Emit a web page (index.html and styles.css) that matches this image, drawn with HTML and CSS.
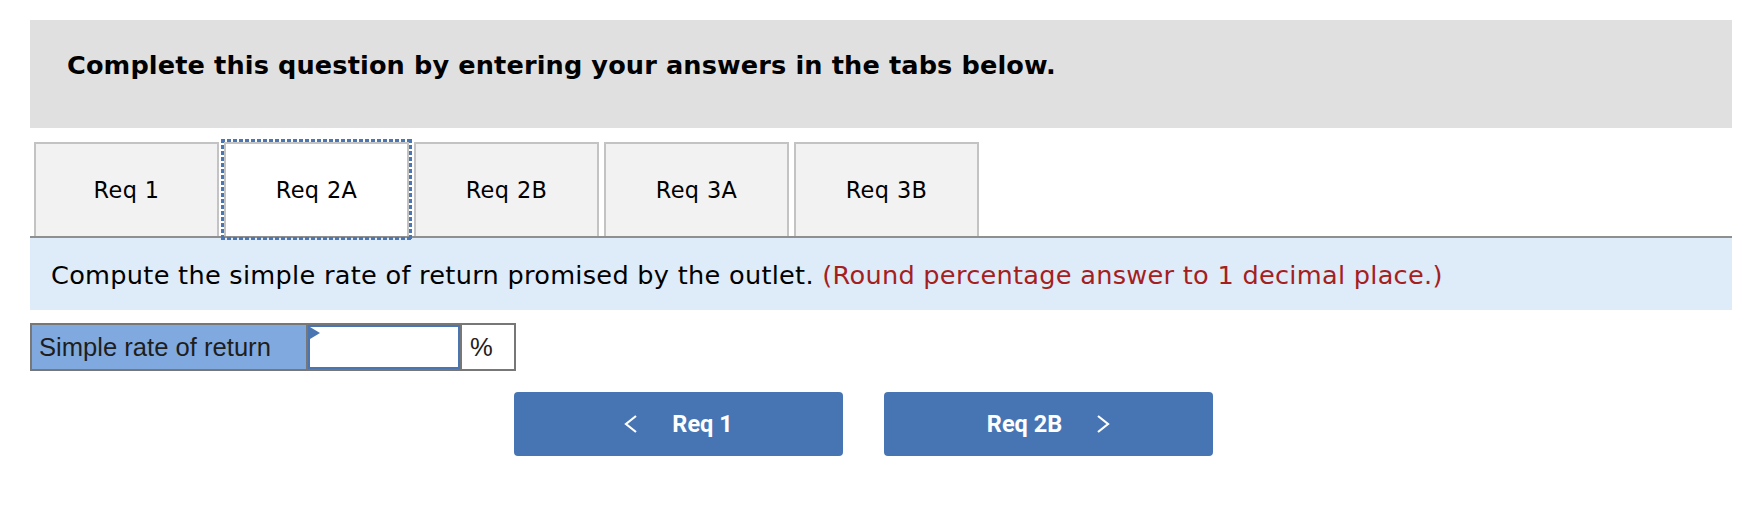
FILE: index.html
```html
<!DOCTYPE html>
<html lang="en">
<head>
    <meta charset="UTF-8">
    <meta name="viewport" content="width=device-width, initial-scale=1.0">
    <title>Question</title>
    <link rel="stylesheet" href="styles.css">
</head>
<body>
    <div class="question">
        <div class="prompt">
            <h2>Complete this question by entering your answers in the tabs below.</h2>
        </div>

        <ul class="tabs">
            <li class="tab">Req 1</li>
            <li class="tab active">Req 2A</li>
            <li class="tab">Req 2B</li>
            <li class="tab">Req 3A</li>
            <li class="tab">Req 3B</li>
        </ul>

        <div class="instruction">
            Compute the simple rate of return promised by the outlet. <span class="hint">(Round percentage answer to 1 decimal place.)</span>
        </div>

        <div class="answer-row">
            <div class="answer-label">Simple rate of return</div>
            <div class="answer-input"><input type="text"></div>
            <div class="answer-unit">%</div>
        </div>

        <div class="nav">
            <button class="nav-btn">
                <svg width="14" height="18" viewBox="0 0 14 18"><polyline points="12,1 2,9 12,17" fill="none" stroke="#fff" stroke-width="2.2"/></svg>
                <span>Req 1</span>
            </button>
            <button class="nav-btn">
                <span>Req 2B</span>
                <svg width="14" height="18" viewBox="0 0 14 18"><polyline points="2,1 12,9 2,17" fill="none" stroke="#fff" stroke-width="2.2"/></svg>
            </button>
        </div>
    </div>
</body>
</html>
```

FILE: styles.css
```css
body {
    margin: 0;
    padding: 0;
    background: #fff;
    font-family: "DejaVu Sans", Verdana, sans-serif;
    color: #000;
}
.question {
    margin: 20px 24px 0 30px;
}
.prompt {
    background: #e0e0e0;
    height: 108px;
    padding: 30px 37px 0;
    box-sizing: border-box;
}
.prompt h2 {
    margin: 0;
    font-size: 25.6px;
    line-height: 30px;
    font-weight: bold;
    letter-spacing: 0.12px;
}
.tabs {
    list-style: none;
    margin: 14px 0 0;
    padding: 0 0 0 4px;
    display: flex;
    gap: 5px;
    border-bottom: 2px solid #8f8f8f;
}
.tab {
    width: 185px;
    height: 94px;
    box-sizing: border-box;
    border: 2px solid #c3c3c3;
    border-bottom: none;
    background: #f2f2f2;
    display: flex;
    align-items: center;
    justify-content: center;
    font-size: 22.4px;
    letter-spacing: 0.4px;
    cursor: pointer;
    position: relative;
}
.tab.active {
    background: #fff;
}
/* focus ring with square dots */
.tab.active::after {
    content: "";
    position: absolute;
    top: -5px;
    left: -5px;
    right: -5px;
    bottom: -4px;
    pointer-events: none;
    background:
        repeating-linear-gradient(to right, #4a77b4 0 4px, transparent 4px 6px) top / 100% 3px no-repeat,
        repeating-linear-gradient(to right, #4a77b4 0 4px, transparent 4px 6px) bottom / 100% 3px no-repeat,
        repeating-linear-gradient(to bottom, #4a77b4 0 4px, transparent 4px 6px) left / 3px 100% no-repeat,
        repeating-linear-gradient(to bottom, #4a77b4 0 4px, transparent 4px 6px) right / 3px 100% no-repeat;
    z-index: 1;
}
.instruction {
    background: #deebf8;
    padding: 22px 21px 20px;
    font-size: 25.6px;
    line-height: 30px;
    letter-spacing: 0.28px;
}
.hint {
    color: #a4201e;
}
.answer-row {
    display: flex;
    width: max-content;
    margin-top: 13px;
    border: 2px solid #777;
    font-family: "Liberation Sans", Arial, sans-serif;
    font-size: 25.6px;
    color: #1e1e1e;
}
.answer-label {
    width: 276px;
    height: 44px;
    box-sizing: border-box;
    padding-left: 7px;
    background: #80aadf;
    border-right: 2px solid #777;
    display: flex;
    align-items: center;
}
.answer-input {
    width: 152px;
    height: 44px;
    box-sizing: border-box;
    border: 2px solid #4a75b3;
    background: #fff;
    position: relative;
}
.answer-input::before {
    content: "";
    position: absolute;
    top: 0;
    left: 0;
    border-top: 6px solid transparent;
    border-bottom: 6px solid transparent;
    border-left: 10px solid #4a75b3;
}
.answer-input input {
    width: 100%;
    height: 100%;
    box-sizing: border-box;
    border: none;
    outline: none;
    background: transparent;
    font: inherit;
    padding: 0 6px;
}
.answer-unit {
    width: 54px;
    height: 44px;
    box-sizing: border-box;
    padding-left: 8px;
    border-left: 2px solid #777;
    background: #fff;
    display: flex;
    align-items: center;
}
.nav {
    display: flex;
    gap: 41px;
    margin: 21px 0 0 484px;
}
.nav-btn {
    width: 329px;
    height: 64px;
    padding: 0;
    background: #4775b4;
    border: none;
    border-radius: 4px;
    color: #fff;
    font-family: Roboto, "Liberation Sans", sans-serif;
    font-weight: bold;
    font-size: 23.5px;
    display: flex;
    align-items: center;
    justify-content: center;
    gap: 34px;
    cursor: pointer;
}
```
